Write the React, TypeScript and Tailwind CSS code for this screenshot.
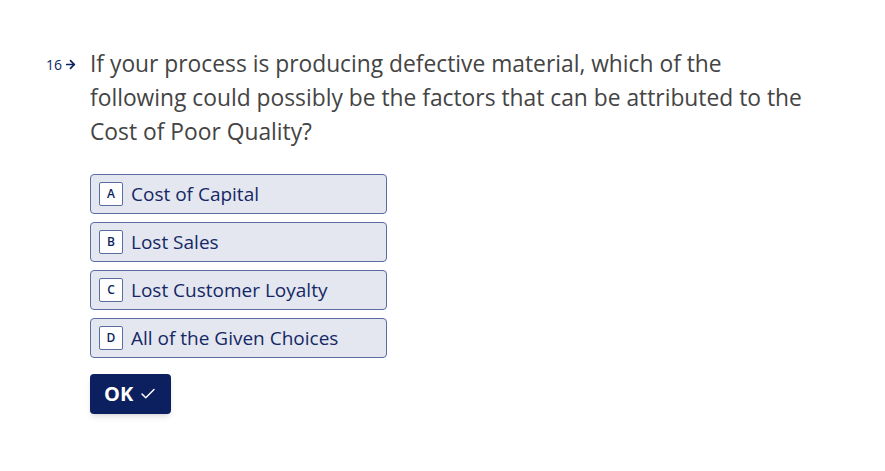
import { ArrowRight, Check } from 'lucide-react';

const choices = [
  { key: 'A', label: 'Cost of Capital' },
  { key: 'B', label: 'Lost Sales' },
  { key: 'C', label: 'Lost Customer Loyalty' },
  { key: 'D', label: 'All of the Given Choices' },
];

export default function App() {
  return (
    <div className="w-[885px] h-[471px] bg-white font-['Open_Sans',sans-serif]">
      <div className="flex pt-[47px] pl-[46px]">
        {/* Question number */}
        <div className="flex items-center h-[34px] w-[44px] shrink-0 text-[#0c1f5e]">
          <span className="text-[14px]">16</span>
          <ArrowRight className="h-[13px] w-[13px] ml-[2px]" strokeWidth={3.2} />
        </div>

        <div className="flex flex-col">
          <h1 className="text-[22.8px] leading-[34px] text-[#444444] w-[720px]">
            If your process is producing defective material, which of the following could possibly be the factors that can be attributed to the Cost of Poor Quality?
          </h1>

          {/* Choices */}
          <div className="flex flex-col gap-[8px] mt-[25px] w-[297px]">
            {choices.map((c) => (
              <div
                key={c.key}
                className="flex items-center h-[40px] px-[8px] rounded-[4px] border border-[#5a6ea3] bg-[#e4e7ef]"
              >
                <span className="flex items-center justify-center w-[24px] h-[24px] rounded-[2px] border border-[#5a6ea3] bg-white text-[12px] font-semibold text-[#0c1f5e]">
                  {c.key}
                </span>
                <span className="ml-[8px] text-[19px] text-[#142766]">{c.label}</span>
              </div>
            ))}
          </div>

          <div className="mt-[16px]">
            <button className="flex items-center gap-[6px] h-[40px] px-[14px] rounded-[4px] bg-[#0c1f5e] text-white shadow-md">
              <span className="text-[20px] font-bold">OK</span>
              <Check className="h-[18px] w-[18px]" strokeWidth={2} />
            </button>
          </div>
        </div>
      </div>
    </div>
  );
}
